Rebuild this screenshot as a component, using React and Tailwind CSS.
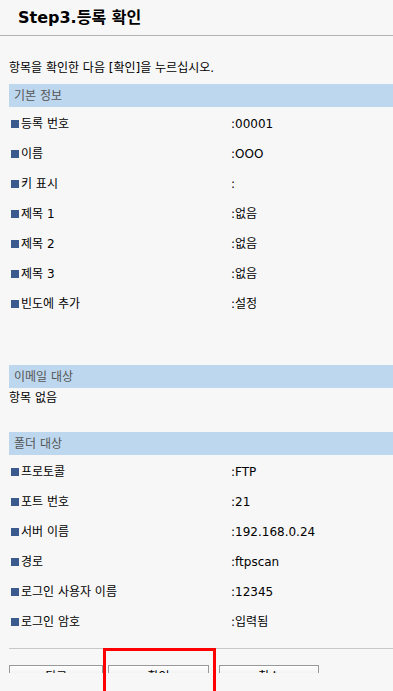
import React from "react";

const basic = [
  ["등록 번호", "00001"],
  ["이름", "OOO"],
  ["키 표시", ""],
  ["제목 1", "없음"],
  ["제목 2", "없음"],
  ["제목 3", "없음"],
  ["빈도에 추가", "설정"],
];

const folder = [
  ["프로토콜", "FTP"],
  ["포트 번호", "21"],
  ["서버 이름", "192.168.0.24"],
  ["경로", "ftpscan"],
  ["로그인 사용자 이름", "12345"],
  ["로그인 암호", "입력됨"],
];

const Row = ({ label, value }) => (
  <div className="flex items-center h-[30px] pl-[2px]">
    <div className="flex items-center w-[220px]">
      <span className="w-[8px] h-[8px] bg-[#3b5a8e] mr-[2px]" />
      <span>{label}</span>
    </div>
    <span>:{value}</span>
  </div>
);

const Bar = ({ children }) => (
  <div className="h-[23px] bg-[#bdd7ee] flex items-center pl-[5px] text-[#555]">
    {children}
  </div>
);

export default function App() {
  return (
    <div
      className="relative w-[393px] h-[691px] overflow-hidden bg-[#f7f7f7] text-[12px] text-black"
      style={{ fontFamily: '"DejaVu Sans", "Noto Sans CJK KR", sans-serif' }}
    >
      {/* title */}
      <div className="h-[36px] border-b border-[#b3b3b3] flex items-center pl-[18px]">
        <h1 className="text-[16px] font-bold leading-none">Step3.등록 확인</h1>
      </div>

      <div className="pl-[9px]">
        <p className="mt-[22px] h-[20px] leading-[20px]">
          항목을 확인한 다음 [확인]을 누르십시오.
        </p>

        <div className="mt-[6px]">
          <Bar>기본 정보</Bar>
        </div>
        <div className="mt-[2px]">
          {basic.map(([l, v]) => (
            <Row key={l} label={l} value={v} />
          ))}
        </div>

        <div className="mt-[46px]">
          <Bar>이메일 대상</Bar>
        </div>
        <p className="h-[21px] leading-[21px]">항목 없음</p>

        <div className="mt-[23px]">
          <Bar>폴더 대상</Bar>
        </div>
        <div className="mt-[2px]">
          {folder.map(([l, v]) => (
            <Row key={l} label={l} value={v} />
          ))}
        </div>

        <div className="mt-[11px] border-t border-[#c8c8c8]" />

        {/* buttons, clipped by the scroll area */}
        <div className="mt-[16px] h-[8px] overflow-hidden flex">
          <button className="w-[94px] h-[24px] shrink-0 border border-[#999] bg-gradient-to-b from-white to-[#d8d8d8] text-[12px]">
            뒤로
          </button>
          <button className="ml-[5px] w-[101px] h-[24px] shrink-0 border border-[#999] bg-gradient-to-b from-white to-[#d8d8d8] text-[12px]">
            확인
          </button>
          <button className="ml-[10px] w-[100px] h-[24px] shrink-0 border border-[#999] bg-gradient-to-b from-white to-[#d8d8d8] text-[12px]">
            취소
          </button>
        </div>
      </div>

      {/* highlight annotation */}
      <div className="absolute left-[103px] top-[648px] w-[113px] h-[60px] border-[3px] border-[#ff0000]" />
    </div>
  );
}
